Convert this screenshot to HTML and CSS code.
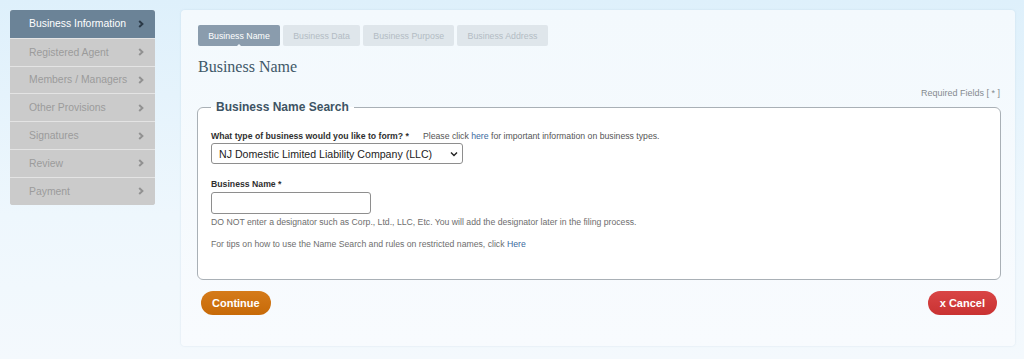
FILE: index.html
```html
<!DOCTYPE html>
<html>
<head>
<meta charset="utf-8">
<link rel="stylesheet" href="styles.css">
</head>
<body>
<div class="page">
  <nav class="sidebar">
    <div class="nav-item active"><span>Business Information</span><svg class="chev" width="6" height="8" viewBox="0 0 6 8"><path d="M1.2 1 L4.4 4 L1.2 7" fill="none" stroke-width="2"/></svg></div>
    <div class="nav-item"><span>Registered Agent</span><svg class="chev" width="6" height="8" viewBox="0 0 6 8"><path d="M1.2 1 L4.4 4 L1.2 7" fill="none" stroke-width="2"/></svg></div>
    <div class="nav-item"><span>Members / Managers</span><svg class="chev" width="6" height="8" viewBox="0 0 6 8"><path d="M1.2 1 L4.4 4 L1.2 7" fill="none" stroke-width="2"/></svg></div>
    <div class="nav-item"><span>Other Provisions</span><svg class="chev" width="6" height="8" viewBox="0 0 6 8"><path d="M1.2 1 L4.4 4 L1.2 7" fill="none" stroke-width="2"/></svg></div>
    <div class="nav-item"><span>Signatures</span><svg class="chev" width="6" height="8" viewBox="0 0 6 8"><path d="M1.2 1 L4.4 4 L1.2 7" fill="none" stroke-width="2"/></svg></div>
    <div class="nav-item"><span>Review</span><svg class="chev" width="6" height="8" viewBox="0 0 6 8"><path d="M1.2 1 L4.4 4 L1.2 7" fill="none" stroke-width="2"/></svg></div>
    <div class="nav-item"><span>Payment</span><svg class="chev" width="6" height="8" viewBox="0 0 6 8"><path d="M1.2 1 L4.4 4 L1.2 7" fill="none" stroke-width="2"/></svg></div>
  </nav>
  <main class="panel">
    <div class="tabs">
      <div class="tab active">Business Name</div>
      <div class="tab">Business Data</div>
      <div class="tab">Business Purpose</div>
      <div class="tab">Business Address</div>
    </div>
    <h1 class="title">Business Name</h1>
    <div class="required">Required Fields [ * ]</div>
    <fieldset class="box">
      <legend>Business Name Search</legend>
      <div class="row">
        <label class="lbl">What type of business would you like to form? *</label>
        <span class="info">Please click <a>here</a> for important information on business types.</span>
      </div>
      <div class="select">
        <span>NJ Domestic Limited Liability Company (LLC)</span>
        <svg width="8" height="6" viewBox="0 0 8 6"><path d="M1 1.5 L4 4.5 L7 1.5" fill="none" stroke="#222" stroke-width="1.4"/></svg>
      </div>
      <label class="lbl name-lbl">Business Name *</label>
      <div class="input"></div>
      <p class="help">DO NOT enter a designator such as Corp., Ltd., LLC, Etc. You will add the designator later in the filing process.</p>
      <p class="help tips">For tips on how to use the Name Search and rules on restricted names, click <a>Here</a></p>
    </fieldset>
    <div class="actions">
      <button class="btn continue">Continue</button>
      <button class="btn cancel">x Cancel</button>
    </div>
  </main>
</div>
</body>
</html>
```
FILE: styles.css
```css
* { box-sizing: border-box; }
html, body { margin: 0; padding: 0; }
body {
  width: 1024px;
  height: 359px;
  overflow: hidden;
  font-family: "Liberation Sans", Arial, sans-serif;
  background: linear-gradient(180deg, #def0fb 0%, #eef7fd 60%, #f4f9fd 100%);
}
.page {
  display: flex;
  align-items: flex-start;
  padding: 10px 9px 0 10px;
  gap: 26px;
}
.sidebar {
  width: 145px;
  border-radius: 3px;
  overflow: hidden;
  background: #c9c9c9;
  flex-shrink: 0;
}
.nav-item {
  height: 27.8px;
  display: flex;
  align-items: center;
  justify-content: space-between;
  padding: 0 11px 0 19px;
  font-size: 10.4px;
  color: #9b9b9b;
  background: #cbcbcb;
  border-top: 1px solid #e4e4e4;
}
.nav-item:first-child { border-top: none; }
.nav-item.active {
  background: #6b8397;
  color: #ffffff;
}
.chev { stroke: #929292; flex-shrink: 0; }
.nav-item.active .chev { stroke: #2b3a48; }
.panel {
  flex: 1;
  height: 336px;
  background: linear-gradient(180deg, #f3f9fd 0%, #f8fbfe 100%);
  border-radius: 4px;
  padding: 15px 14px 0 16px;
  box-shadow: 0 0 2px rgba(160, 190, 210, 0.4);
}
.tabs {
  display: flex;
  gap: 3px;
  margin-left: 1px;
}
.tab {
  height: 21px;
  padding: 0 10.2px;
  display: flex;
  align-items: center;
  font-size: 8.8px;
  color: #b3bcc4;
  background: #dfe6eb;
  border-radius: 2px;
  position: relative;
}
.tab.active {
  background: #8a9cad;
  color: #ffffff;
}
.tab.active::after {
  content: "";
  position: absolute;
  left: 50%;
  bottom: -1px;
  margin-left: -3px;
  border-left: 3px solid transparent;
  border-right: 3px solid transparent;
  border-bottom: 3px solid #f3f9fd;
}
.title {
  font-family: "Liberation Serif", "Times New Roman", serif;
  font-weight: normal;
  font-size: 16px;
  color: #3f5868;
  margin: 12px 0 0 1px;
  height: 20px;
}
.required {
  text-align: right;
  font-size: 9px;
  color: #858b90;
  margin: 10px 0 0;
  padding-right: 1px;
}
.box {
  margin: 2px 0 0 0;
  border: 1px solid #a9b0b6;
  border-radius: 6px;
  padding: 12px 13px 0 13px;
  height: 180px;
  background: #ffffff;
}
.box legend {
  font-size: 12px;
  font-weight: bold;
  color: #3d5364;
  padding: 0 5px;
  margin-left: 0;
}
.row {
  display: flex;
  align-items: baseline;
  gap: 14px;
  margin-top: 5px;
}
.lbl {
  font-size: 8.7px;
  font-weight: bold;
  color: #2f2f2f;
  display: block;
}
.info {
  font-size: 8.7px;
  color: #555;
}
a { color: #3a6a9e; }
.select {
  margin-top: 2px;
  width: 252px;
  height: 21px;
  border: 1px solid #8e8e8e;
  border-radius: 3px;
  display: flex;
  align-items: center;
  justify-content: space-between;
  padding: 0 4px 0 7px;
  font-size: 10.6px;
  color: #222;
  background: #fff;
}
.name-lbl { margin-top: 15px; }
.input {
  margin-top: 3px;
  width: 160px;
  height: 22px;
  border: 1px solid #8e8e8e;
  border-radius: 3px;
  background: #fff;
}
.help {
  font-size: 8.68px;
  color: #6e6e6e;
  margin: 3px 0 0;
}
.help.tips { margin-top: 12px; }
.actions {
  display: flex;
  justify-content: space-between;
  margin-top: 11px;
  padding: 0 4px 0 4px;
}
.btn {
  border: none;
  border-radius: 12px;
  height: 24px;
  font-family: "Liberation Sans", Arial, sans-serif;
  font-weight: bold;
  font-size: 11px;
  color: #fff;
  white-space: nowrap;
}
.continue {
  background: linear-gradient(180deg, #d57b1a 0%, #c76a08 100%);
  padding: 0 11px;
}
.cancel {
  background: linear-gradient(180deg, #d94545 0%, #c93232 100%);
  padding: 0 12px;
}
```
